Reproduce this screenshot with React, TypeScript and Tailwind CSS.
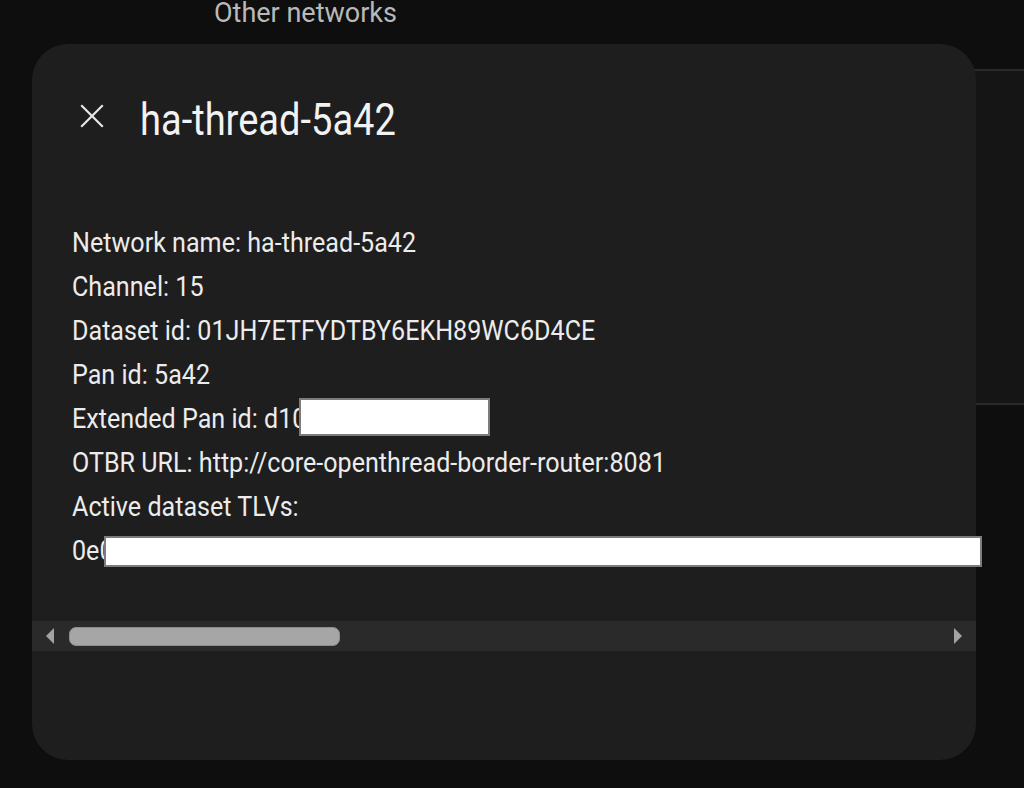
import React from "react";

const font = { fontFamily: "Roboto, 'Noto Sans', sans-serif" };

function CloseIcon() {
  return (
    <svg width="24" height="24" viewBox="0 0 24 24" fill="none" stroke="#e6e6e6" strokeWidth="2.2" strokeLinecap="square">
      <path d="M2 2 L22 22 M22 2 L2 22" />
    </svg>
  );
}

function Line({ children, box }: { children: React.ReactNode; box?: string }) {
  return (
    <div className="relative h-[44px] whitespace-nowrap leading-[44px]">
      <span className="inline-block origin-left scale-x-[0.93]">{children}</span>
      {box && <div className={box} />}
    </div>
  );
}

export default function App() {
  return (
    <div className="relative h-[788px] w-full overflow-hidden bg-[#0e0e0e]" style={font}>
      {/* page behind the dialog */}
      <div className="pl-[214px] -mt-[7px] h-[76px]">
        <span className="inline-block origin-left text-[27px] leading-[40px] text-[#b9b9b9]">
          Other networks
        </span>
      </div>
      <div className="ml-[40px] h-[336px] border-y-2 border-[#2a2a2a] bg-[#151515]" />

      {/* dialog */}
      <div className="absolute left-[32px] top-[44px] flex h-[716px] w-[944px] flex-col rounded-[36px] bg-[#1e1e1e] pt-[52px] text-[#ececec]">
        <div className="flex h-12 items-center pl-[48px]">
          <div className="-mt-2">
            <CloseIcon />
          </div>
          <span className="ml-[36px] inline-block origin-left scale-x-[0.865] text-[44px] leading-none text-[#f2f2f2]">
            ha-thread-5a42
          </span>
        </div>

        <div className="mt-[77px] pl-[40px] text-[27px]">
          <Line>Network name: ha-thread-5a42</Line>
          <Line>Channel: 15</Line>
          <Line>Dataset id: 01JH7ETFYDTBY6EKH89WC6D4CE</Line>
          <Line>Pan id: 5a42</Line>
          <Line box="absolute left-[227px] top-[1px] h-[38px] w-[191px] border-2 border-[#7c7c7c] bg-white">
            Extended Pan id: d10
          </Line>
          <Line>OTBR URL: http://core-openthread-border-router:8081</Line>
          <Line>Active dataset TLVs:</Line>
          <Line box="absolute left-[32px] top-[7px] h-[31px] w-[878px] border-2 border-[#7c7c7c] bg-white">
            0e08
          </Line>
        </div>

        {/* horizontal scrollbar */}
        <div className="mt-[48px] flex h-[30px] items-center bg-[#2a2a2a] px-[12px]">
          <svg width="12" height="18" viewBox="0 0 12 18">
            <path d="M10 1 L2 9 L10 17 Z" fill="#a3a3a3" />
          </svg>
          <div className="ml-[13px] h-[19px] w-[271px] rounded-[7px] border border-[#8c8c8c] bg-[#a6a6a6]" />
          <div className="flex-1" />
          <svg width="12" height="18" viewBox="0 0 12 18">
            <path d="M2 1 L10 9 L2 17 Z" fill="#a3a3a3" />
          </svg>
        </div>
      </div>
    </div>
  );
}
